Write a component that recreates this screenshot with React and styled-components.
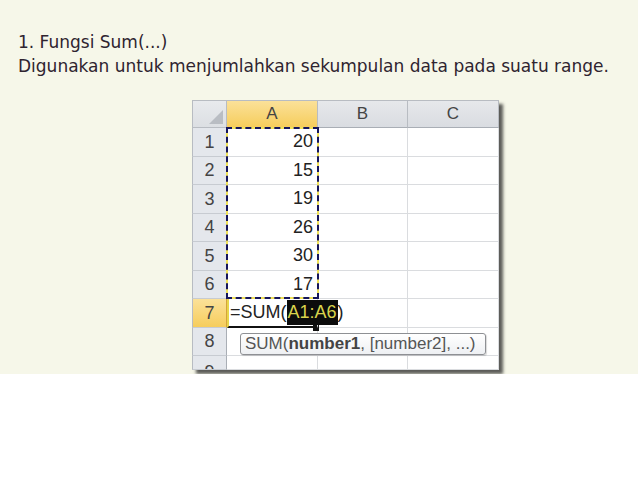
import React from "react";
import styled, { createGlobalStyle } from "styled-components";

const GlobalStyle = createGlobalStyle`
  html, body {
    margin: 0;
    padding: 0;
    background: #ffffff;
  }
  body {
    font-family: "DejaVu Sans", Verdana, sans-serif;
  }
`;

const values = [20, 15, 19, 26, 30, 17];

const App = () => {
  return (
    <Page>
      <GlobalStyle />
      <Intro>
        <Title>1. Fungsi Sum(...)</Title>
        <Desc>Digunakan untuk menjumlahkan sekumpulan data pada suatu range.</Desc>
      </Intro>

      <Sheet>
        <Corner>
          <svg width="14" height="14" viewBox="0 0 14 14">
            <polygon points="14,0 14,14 0,14" fill="#b9bdc3" />
          </svg>
        </Corner>
        <ColHead $active>A</ColHead>
        <ColHead>B</ColHead>
        <ColHead>C</ColHead>

        {values.map((v, i) => (
          <React.Fragment key={i}>
            <RowHead>{i + 1}</RowHead>
            <Cell $right>{v}</Cell>
            <Cell />
            <Cell />
          </React.Fragment>
        ))}

        <RowHead $active>7</RowHead>
        <EditCell>
          =SUM(<RefHighlight>A1:A6</RefHighlight>)
        </EditCell>
        <Cell />
        <Cell />

        <RowHead>8</RowHead>
        <Cell />
        <Cell />
        <Cell />

        <RowHead $partial>9</RowHead>
        <Cell />
        <Cell />
        <Cell />

        <Marquee />
        <FillHandle />
        <Tip>
          SUM(<b>number1</b>, [number2], ...)
        </Tip>
      </Sheet>
    </Page>
  );
};

const Page = styled.div`
  height: 374px;
  background: #f6f7e9;
  padding: 30px 0 0 18px;
  box-sizing: border-box;
`;

const Intro = styled.div`
  color: #2f2430;
  font-size: 17px;
  line-height: 24px;
`;

const Title = styled.div``;

const Desc = styled.div``;

const Sheet = styled.div`
  position: relative;
  margin: 22px 0 0 174px;
  width: 307px;
  height: 270px;
  display: grid;
  grid-template-columns: 35px 91px 90px 91px;
  grid-template-rows: 28px repeat(8, 28.5px) 14px;
  background: #ffffff;
  box-shadow: 4px 4px 3px rgba(40, 40, 40, 0.75);
  font-family: "Liberation Sans", Arial, sans-serif;
`;

const Corner = styled.div`
  background: linear-gradient(#e8eaed, #dcdfe3);
  border: 1px solid #b8bcc2;
  display: flex;
  align-items: flex-end;
  justify-content: flex-end;
  padding: 0 3px 3px 0;
  box-sizing: border-box;
`;

const ColHead = styled.div`
  background: ${(p) =>
    p.$active
      ? "linear-gradient(#fbe199, #f6cd5c)"
      : "linear-gradient(#e6e8eb, #d9dce1)"};
  border-top: 1px solid #b8bcc2;
  border-right: 1px solid #b8bcc2;
  border-bottom: 1px solid ${(p) => (p.$active ? "#d4a43a" : "#a9aeb5")};
  color: #444;
  font-size: 17px;
  display: flex;
  align-items: center;
  justify-content: center;
  box-sizing: border-box;
`;

const RowHead = styled.div`
  background: ${(p) =>
    p.$active ? "linear-gradient(#fbe199, #f6cd5c)" : "#e4e7ec"};
  border-left: 1px solid #b8bcc2;
  border-right: 1px solid ${(p) => (p.$active ? "#d4a43a" : "#a9aeb5")};
  border-bottom: 1px solid #c7cbd1;
  color: #444;
  font-size: 18px;
  display: flex;
  align-items: ${(p) => (p.$partial ? "flex-start" : "center")};
  justify-content: center;
  box-sizing: border-box;
  overflow: hidden;
  line-height: 1;
  padding-top: ${(p) => (p.$partial ? "7px" : "0")};
`;

const Cell = styled.div`
  border-right: 1px solid #dadcdf;
  border-bottom: 1px solid #dadcdf;
  font-size: 18px;
  color: #222;
  display: flex;
  align-items: center;
  justify-content: ${(p) => (p.$right ? "flex-end" : "flex-start")};
  padding: 0 4px 0 3px;
  box-sizing: border-box;
`;

const EditCell = styled(Cell)`
  position: relative;
  z-index: 2;
  white-space: nowrap;
  overflow: visible;
  border-left: 2px solid #e8d64a;
  border-bottom: 2px solid #111;
  padding-left: 1px;
  color: #222;
`;

const RefHighlight = styled.span`
  background: #0c0c0c;
  color: #d9d34c;
  padding: 2px 1px;
`;

const Marquee = styled.div`
  position: absolute;
  left: 34px;
  top: 27px;
  width: 93px;
  height: 172px;
  box-sizing: border-box;
  border: 2px solid #f1e35a;
  pointer-events: none;
  &::after {
    content: "";
    position: absolute;
    inset: -2px;
    border: 2px dashed #15155c;
  }
`;

const FillHandle = styled.div`
  position: absolute;
  left: 121px;
  top: 225px;
  width: 6px;
  height: 6px;
  background: #111;
  z-index: 1;
`;

const Tip = styled.div`
  position: absolute;
  left: 48px;
  top: 233px;
  width: 246px;
  height: 22px;
  box-sizing: border-box;
  border: 1px solid #8e9094;
  border-radius: 3px;
  background: linear-gradient(#ffffff, #eef0f3);
  box-shadow: 1px 1px 1px rgba(0, 0, 0, 0.15);
  color: #555;
  font-size: 17px;
  line-height: 20px;
  padding-left: 4px;
  white-space: nowrap;
  z-index: 3;
  b {
    color: #444;
  }
`;

export default App;
